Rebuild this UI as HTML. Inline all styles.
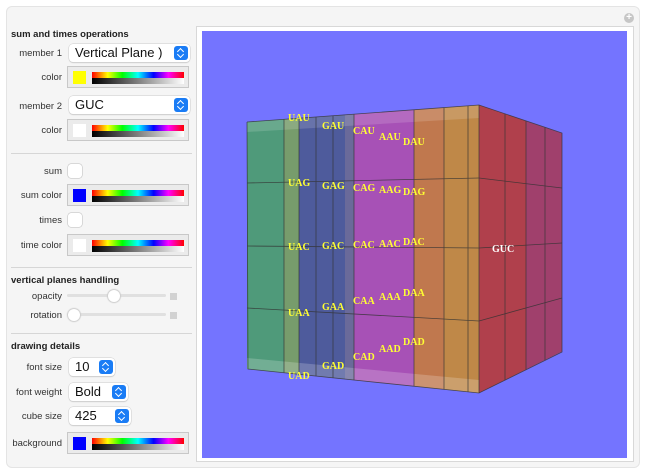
<!DOCTYPE html>
<html><head><meta charset="utf-8"><style>
body{margin:0;width:646px;height:475px;background:#fff;font-family:"Liberation Sans",sans-serif;position:relative;overflow:hidden}
.panel{position:absolute;left:6px;top:6px;width:634px;height:462px;background:#f5f5f5;border:1px solid #e4e4e4;border-radius:6px;box-sizing:border-box}
.a{position:absolute}
.h{position:absolute;left:11px;font-size:9.5px;font-weight:bold;color:#222}
.l{position:absolute;font-size:9.5px;color:#333;text-align:right;width:60px;left:2px}
.pop{position:absolute;background:#fff;border-radius:4px;box-shadow:0 0 0 0.5px #ccc,0 1px 1px #ccc;font-size:13px;color:#111;padding-left:6px;box-sizing:border-box;line-height:18px;height:18px}
.pop i{position:absolute;right:2px;top:2px;width:14px;height:14px;background:#1a7cf5;border-radius:3px}
.pop i:before{content:"";position:absolute;left:4px;top:3px;width:4px;height:4px;border-left:1.3px solid #fff;border-top:1.3px solid #fff;transform:rotate(45deg)}
.pop i:after{content:"";position:absolute;left:4px;top:6px;width:4px;height:4px;border-right:1.3px solid #fff;border-bottom:1.3px solid #fff;transform:rotate(45deg)}
.cb{position:absolute;left:67px;width:23px;height:22px;border:1px solid #c8c8c8;background:#ebebeb;box-sizing:border-box;width:122px}
.cb .sw{position:absolute;left:5px;top:4px;width:13px;height:13px}
.cb .gr{position:absolute;left:24px;top:5px;width:92px;height:12px;background:linear-gradient(to bottom,rgba(0,0,0,0) 0%,rgba(0,0,0,0) 50%,#000 50%,#fff 100%),linear-gradient(to right,#f00,#ff0 17%,#0f0 33%,#0ff 50%,#00f 67%,#f0f 83%,#f00)}
.cb .gr:after{content:"";position:absolute;left:0;right:0;top:6px;height:6px;background:linear-gradient(to right,#000,#fff)}
.chk{position:absolute;left:68px;width:14px;height:14px;background:#fff;border-radius:3px;box-shadow:0 0 0 0.5px #bbb}
.sep{position:absolute;left:11px;width:181px;height:1px;background:#d6d6d6}
.tr{position:absolute;left:67px;width:99px;height:3px;background:#e0e0e0;border-radius:2px}
.th{position:absolute;width:12px;height:12px;border-radius:50%;background:#fff;box-shadow:0 0 1px 1px #ccc}
.pl{position:absolute;left:170px;width:7px;height:7px;background:#d2d2d2}
</style></head><body>
<div class="panel"></div>
<div class="a" style="left:624px;top:13px;width:10px;height:10px;border-radius:50%;background:#c6c6c6;color:#fff;font-size:10px;line-height:10px;text-align:center;font-weight:bold">+</div>
<div class="a" style="left:196px;top:26px;width:438px;height:436px;background:#fff;border:1px solid #d8d8d8;box-sizing:border-box"></div>
<div class="a" style="left:202px;top:31px;width:425px;height:427px;background:#7474ff"></div>

<div class="h" style="top:29px">sum and times operations</div>
<div class="l" style="top:48px">member 1</div>
<div class="pop" style="left:69px;top:44px;width:121px">Vertical Plane )<i></i></div>
<div class="l" style="top:72px">color</div>
<div class="cb" style="top:66px"><div class="sw" style="background:#ff0"></div><div class="gr"></div></div>
<div class="l" style="top:101px">member 2</div>
<div class="pop" style="left:69px;top:96px;width:121px">GUC<i></i></div>
<div class="l" style="top:125px">color</div>
<div class="cb" style="top:119px"><div class="sw" style="background:#fff"></div><div class="gr"></div></div>
<div class="sep" style="top:153px"></div>
<div class="l" style="top:166px">sum</div>
<div class="chk" style="top:164px"></div>
<div class="l" style="top:190px">sum color</div>
<div class="cb" style="top:184px"><div class="sw" style="background:#00f"></div><div class="gr"></div></div>
<div class="l" style="top:215px">times</div>
<div class="chk" style="top:213px"></div>
<div class="l" style="top:240px">time color</div>
<div class="cb" style="top:234px"><div class="sw" style="background:#fff"></div><div class="gr"></div></div>
<div class="sep" style="top:267px"></div>
<div class="h" style="top:275px">vertical planes handling</div>
<div class="l" style="top:291px">opacity</div>
<div class="tr" style="top:294px"></div><div class="th" style="left:108px;top:290px"></div><div class="pl" style="top:293px"></div>
<div class="l" style="top:310px">rotation</div>
<div class="tr" style="top:313px"></div><div class="th" style="left:68px;top:309px"></div><div class="pl" style="top:312px"></div>
<div class="sep" style="top:333px"></div>
<div class="h" style="top:341px">drawing details</div>
<div class="l" style="top:362px">font size</div>
<div class="pop" style="left:69px;top:358px;width:46px">10<i></i></div>
<div class="l" style="top:387px">font weight</div>
<div class="pop" style="left:69px;top:383px;width:59px">Bold<i></i></div>
<div class="l" style="top:411px">cube size</div>
<div class="pop" style="left:69px;top:407px;width:62px">425<i></i></div>
<div class="l" style="top:438px">background</div>
<div class="cb" style="top:432px"><div class="sw" style="background:#00f"></div><div class="gr"></div></div>

<svg class="a" style="left:0;top:0" width="646" height="475">
<g stroke="none">
<polygon points="247,122 284,119.3 284,372.8 247,369" fill="#4f9a7a"/>
<polygon points="284,119.3 299,118.2 299,374.4 284,372.8" fill="#779c6c"/>
<polygon points="299,118.2 345,114.8 345,379.1 299,374.4" fill="#4e5b9c"/>
<polygon points="345,114.8 354,114.2 354,380.1 345,379.1" fill="#6a6a9a"/>
<polygon points="354,114.2 414,109.8 414,386.3 354,380.1" fill="#a751b6"/>
<polygon points="414,109.8 444,107.6 444,389.4 414,386.3" fill="#c0784e"/>
<polygon points="444,107.6 479,105 479,393 444,389.4" fill="#bf8848"/>
<polygon points="479,105 526,121 526,369.5 479,393" fill="#b0404c"/>
<polygon points="526,121 562,133.3 562,351.5 526,369.5" fill="#a0406c"/>
<polygon points="247,122 479,105 479,118 247,132" fill="#fff" opacity="0.15"/>
<polygon points="247,369 479,393 479,380 247,358" fill="#fff" opacity="0.2"/>
</g>
<g stroke="#333" stroke-width="0.8" fill="none" opacity="0.8">
<polyline points="247,122 479,105 562,133 562,352 479,393 248,369 247,122"/>
<line x1="479" y1="105" x2="479" y2="393"/>
<line x1="247" y1="183" x2="479" y2="178"/><line x1="479" y1="178" x2="562" y2="188"/>
<line x1="247" y1="246" x2="479" y2="248"/><line x1="479" y1="248" x2="562" y2="243"/>
<line x1="247" y1="308" x2="479" y2="321"/><line x1="479" y1="321" x2="562" y2="298"/>
<line x1="284" y1="119" x2="284" y2="373"/><line x1="299" y1="118" x2="299" y2="374"/>
<line x1="316" y1="117" x2="316" y2="376"/><line x1="333" y1="116" x2="333" y2="378"/>
<line x1="354" y1="114" x2="354" y2="380"/><line x1="414" y1="110" x2="414" y2="386"/>
<line x1="444" y1="108" x2="444" y2="389"/><line x1="468" y1="106" x2="468" y2="392"/>
<line x1="505" y1="114" x2="505" y2="380"/><line x1="526" y1="121" x2="526" y2="370"/>
<line x1="545" y1="127" x2="545" y2="360"/>
</g>
<g font-family="Liberation Serif,serif" font-weight="bold" font-size="10" fill="#ffff33">
<text x="288" y="121">UAU</text><text x="322" y="129">GAU</text><text x="353" y="134">CAU</text><text x="379" y="140">AAU</text><text x="403" y="145">DAU</text>
<text x="288" y="186">UAG</text><text x="322" y="189">GAG</text><text x="353" y="191">CAG</text><text x="379" y="193">AAG</text><text x="403" y="195">DAG</text>
<text x="288" y="250">UAC</text><text x="322" y="249">GAC</text><text x="353" y="248">CAC</text><text x="379" y="247">AAC</text><text x="403" y="245">DAC</text>
<text x="288" y="316">UAA</text><text x="322" y="310">GAA</text><text x="353" y="304">CAA</text><text x="379" y="300">AAA</text><text x="403" y="296">DAA</text>
<text x="288" y="379">UAD</text><text x="322" y="369">GAD</text><text x="353" y="360">CAD</text><text x="379" y="352">AAD</text><text x="403" y="345">DAD</text>
<text x="492" y="252" fill="#fff">GUC</text>
</g>
</svg>
</body></html>
